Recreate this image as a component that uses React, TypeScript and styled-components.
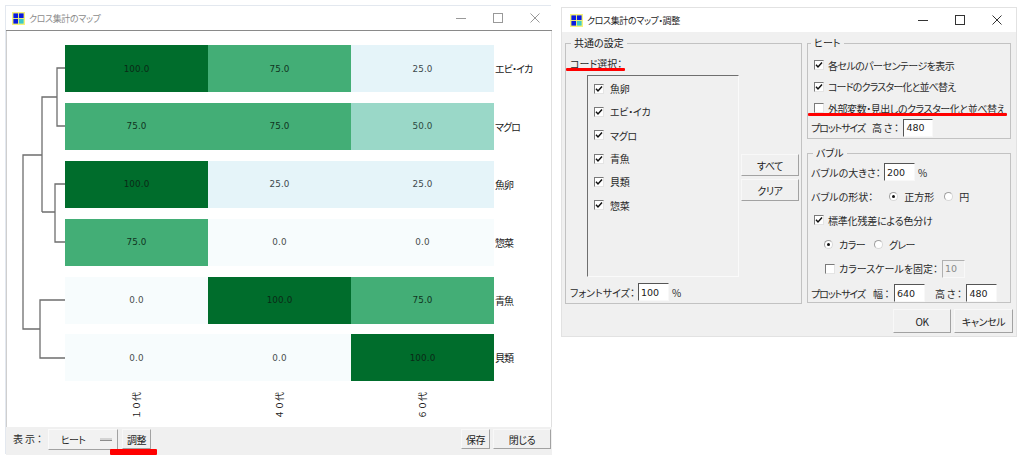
import React from "react";
import styled, { createGlobalStyle } from "styled-components";

const Global = createGlobalStyle`
  html, body { margin: 0; padding: 0; background: #fff; }
  body {
    font-family: "Noto Sans CJK JP", "Noto Sans", sans-serif;
    font-size: 10px;
    font-feature-settings: "palt";
    color: #2a2a2a;
  }
`;

const Page = styled.div`
  position: relative;
  width: 1024px;
  height: 466px;
  overflow: hidden;
  display: flex;
  align-items: flex-start;
  gap: 10px;
  padding: 6px 0 0 6px;
  box-sizing: border-box;
`;

const MapWindow = styled.div`
  width: 546px;
  height: 449px;
  display: flex;
  flex-direction: column;
  box-sizing: border-box;
  box-shadow: -1px -1px 0 #e3e8ef;
`;

const SettingsWindow = styled.div`
  width: 454px;
  height: 328px;
  margin-top: 2px;
  display: flex;
  flex-direction: column;
  box-sizing: border-box;
  background: #f0f0f0;
  box-shadow: 0 0 0 1px #e2e2e2;
`;

const TitleBar = styled.div<{ $active?: boolean }>`
  height: ${(p) => (p.$active ? 24 : 25)}px;
  flex: none;
  display: flex;
  align-items: center;
  gap: 4px;
  padding-left: ${(p) => (p.$active ? 8 : 6)}px;
  background: #fff;
  font-size: 9px;
  letter-spacing: -0.4px;
  color: ${(p) => (p.$active ? "#1c1c1c" : "#8c8c8c")};
  box-sizing: border-box;
  border-bottom: ${(p) => (p.$active ? "none" : "1px solid #8a8a8a")};
`;

const TitleText = styled.span`
  flex: 1;
`;

const Controls = styled.div<{ $active?: boolean }>`
  display: flex;
  color: ${(p) => (p.$active ? "#333" : "#999")};
  padding-right: ${(p) => (p.$active ? 14 : 12)}px;
  gap: 27px;
`;

const Plot = styled.div`
  height: 396px;
  flex: none;
  display: flex;
  align-items: flex-start;
  background: #fff;
  box-sizing: border-box;
  border-left: 1px solid #cfcfcf;
  border-right: 1px solid #e0e0e0;
  padding-top: 14px;
`;

const Dendrogram = styled.svg`
  width: 58px;
  height: 345px;
  flex: none;
  display: block;
`;

const Heat = styled.div`
  display: flex;
  flex-direction: column;
`;

const HeatRows = styled.div`
  display: flex;
  flex-direction: column;
  gap: 10.9px;
`;

const HeatRow = styled.div`
  display: flex;
  height: 47px;
`;

const Cell = styled.div<{ $bg: string; $ink: string }>`
  width: 143px;
  display: flex;
  align-items: center;
  justify-content: center;
  background: ${(p) => p.$bg};
  color: ${(p) => p.$ink};
  font-family: "DejaVu Sans", sans-serif;
  font-size: 8.8px;
  letter-spacing: 0.1px;
`;

const RowLabel = styled.div`
  width: 50px;
  padding-left: 1px;
  display: flex;
  align-items: center;
  font-size: 10px;
  letter-spacing: -0.9px;
  color: #222;
`;

const AxisRow = styled.div`
  display: flex;
  padding-top: 8px;
`;

const AxisLabel = styled.div`
  width: 143px;
  display: flex;
  justify-content: center;
  height: 30px;
`;

const AxisText = styled.span`
  writing-mode: vertical-rl;
  text-orientation: sideways;
  transform: rotate(180deg);
  font-size: 9px;
  font-feature-settings: normal;
  color: #222;
`;

const BottomBar = styled.div`
  flex: 1;
  display: flex;
  align-items: flex-start;
  background: #f0f0f0;
  padding: 2px 1px 0 7px;
`;

const BarLabel = styled.span`
  width: 35px;
  height: 19px;
  display: flex;
  align-items: center;
  font-size: 10px;
  letter-spacing: 2px;
`;

const BaseButton = styled.button<{ $w: number; $h?: number }>`
  width: ${(p) => p.$w}px;
  height: ${(p) => p.$h ?? 20}px;
  padding: 0;
  flex: none;
  font: inherit;
  font-size: 10px;
  letter-spacing: -0.4px;
  color: #222;
  background: #f0f0f0;
  border: none;
  border-top: 1px solid #f8f8f8;
  border-left: 1px solid #f8f8f8;
  border-right: 1px solid #a2a2a2;
  border-bottom: 1px solid #a2a2a2;
  box-sizing: border-box;
`;

const SelectBox = styled.div`
  width: 70px;
  height: 21px;
  flex: none;
  display: flex;
  align-items: center;
  justify-content: space-between;
  box-sizing: border-box;
  padding: 0 5px 0 12px;
  margin-right: 4px;
  background: #f2f2f2;
  border-bottom: 1px solid #a2a2a2;
  border-right: 1px solid #a2a2a2;
  border-top: 1px solid #fafafa;
  border-left: 1px solid #fafafa;
  font-size: 10px;
  letter-spacing: -0.8px;
`;

const SelectMark = styled.span`
  width: 12px;
  height: 3px;
  background: #d4d4d4;
  border-bottom: 1px solid #8c8c8c;
  box-sizing: border-box;
`;

const Spacer = styled.div`
  flex: 1;
`;

const SaveGroup = styled.div`
  display: flex;
  gap: 3px;
`;

const Underline = styled.div<{ $x: number; $y: number; $w: number; $h: number }>`
  position: absolute;
  left: ${(p) => p.$x}px;
  top: ${(p) => p.$y}px;
  width: ${(p) => p.$w}px;
  height: ${(p) => p.$h}px;
  background: #f00;
  border-radius: 1px;
`;

const SettingsBody = styled.div`
  display: flex;
  gap: 5px;
  padding: 11px 0 0 3px;
`;

const Column = styled.div`
  display: flex;
  flex-direction: column;
  gap: 14px;
`;

const Group = styled.div<{ $w: number; $h: number }>`
  position: relative;
  width: ${(p) => p.$w}px;
  height: ${(p) => p.$h}px;
  box-sizing: border-box;
  border: 1px solid #c2c2c2;
  padding: 0 3px;
`;

const Legend = styled.span<{ $x: number }>`
  position: absolute;
  left: ${(p) => p.$x}px;
  top: -8px;
  padding: 0 3px;
  background: #f0f0f0;
  line-height: 14px;
  font-size: 10px;
  color: #222;
`;

const CodeLabel = styled.div`
  margin-top: 13px;
  height: 14px;
  line-height: 14px;
  padding-left: 1px;
  font-size: 10px;
`;

const CodeArea = styled.div`
  display: flex;
  margin: 4px 0 0 18px;
`;

const CodeList = styled.div`
  width: 152px;
  height: 202px;
  flex: none;
  box-sizing: border-box;
  border-top: 1px solid #6f6f6f;
  border-left: 1px solid #6f6f6f;
  border-right: 1px solid #fafafa;
  border-bottom: 1px solid #fafafa;
  padding: 1px 0 0 6px;
`;

const ListRow = styled.div`
  height: 23.3px;
  display: flex;
  align-items: center;
  gap: 6px;
  font-size: 10px;
  letter-spacing: -0.3px;
`;

const SideButtons = styled.div`
  display: flex;
  flex-direction: column;
  gap: 3px;
  padding: 79px 0 0 2px;
`;

const Row = styled.div<{ $h?: number; $indent?: number; $gap?: number }>`
  height: ${(p) => p.$h ?? 24}px;
  display: flex;
  align-items: center;
  gap: ${(p) => p.$gap ?? 4}px;
  padding-left: ${(p) => p.$indent ?? 0}px;
  font-size: 10px;
  white-space: nowrap;
`;

const FontRow = styled(Row)`
  margin-top: 6px;
  padding-left: 1px;
`;

const HeatPanel = styled.div`
  padding-top: 10px;
`;

const BubblePanel = styled.div`
  padding-top: 6px;
`;

const NumInput = styled.input<{ $w: number; $disabled?: boolean }>`
  width: ${(p) => p.$w}px;
  height: 18px;
  flex: none;
  box-sizing: border-box;
  padding: 0 0 0 2px;
  margin: 0;
  font-family: "DejaVu Sans", sans-serif;
  font-size: 9.5px;
  color: ${(p) => (p.$disabled ? "#8a8a8a" : "#222")};
  background: ${(p) => (p.$disabled ? "#f0f0f0" : "#fff")};
  border: none;
  border-top: 1px solid ${(p) => (p.$disabled ? "#b0b0b0" : "#555")};
  border-left: 1px solid ${(p) => (p.$disabled ? "#b0b0b0" : "#555")};
  border-right: 1px solid #f8f8f8;
  border-bottom: 1px solid #f8f8f8;
  outline: none;
`;

const Check = styled.span`
  width: 10px;
  height: 10px;
  flex: none;
  box-sizing: border-box;
  background: #fff;
  border-top: 1px solid #7a7a7a;
  border-left: 1px solid #7a7a7a;
  border-right: 1px solid #e4e4e4;
  border-bottom: 1px solid #e4e4e4;
  display: flex;
  align-items: center;
  justify-content: center;
`;

const Radio = styled.span<{ $on?: boolean; $l?: number }>`
  width: 9px;
  height: 9px;
  flex: none;
  margin-left: ${(p) => p.$l ?? 0}px;
  border-radius: 50%;
  box-sizing: border-box;
  background: #fff;
  border: 1px solid #d8d8d8;
  border-top-color: #a0a0a0;
  border-left-color: #a0a0a0;
  display: flex;
  align-items: center;
  justify-content: center;
  &::after {
    content: "";
    width: 3px;
    height: 3px;
    border-radius: 50%;
    background: ${(p) => (p.$on ? "#111" : "transparent")};
  }
`;

const Tight = styled.span<{ $ls: number }>`
  letter-spacing: ${(p) => p.$ls}px;
`;

const FieldName = styled.span<{ $l: number }>`
  margin-left: ${(p) => p.$l}px;
  letter-spacing: 1.5px;
`;

const Footer = styled.div`
  display: flex;
  justify-content: flex-end;
  gap: 3px;
  padding: 5px 3px 0 0;
`;

const Box = ({ on = true }: { on?: boolean }) => (
  <Check>
    {on && (
      <svg width="8" height="8" viewBox="0 0 8 8">
        <path d="M1 3.8 3 6 7 1.6" fill="none" stroke="#111" strokeWidth="1.5" />
      </svg>
    )}
  </Check>
);

const AppIcon = () => (
  <svg width="13" height="13" viewBox="0 0 14 14">
    <rect width="14" height="14" fill="#f6f37a" />
    <rect x="1.5" y="1.5" width="5" height="5" fill="#0a1ae0" />
    <rect x="7.5" y="1.5" width="5" height="5" fill="#0a1ae0" />
    <rect x="1.5" y="7.5" width="5" height="5" fill="#0a1ae0" />
    <rect x="7.5" y="7.5" width="5" height="5" fill="#3cc8c8" />
  </svg>
);

const WinControls = ({ active }: { active?: boolean }) => (
  <Controls $active={active}>
    <svg width="10" height="10" viewBox="0 0 10 10">
      <path d="M0 5.5h10" stroke="currentColor" />
    </svg>
    <svg width="10" height="10" viewBox="0 0 10 10">
      <rect x=".5" y=".5" width="9" height="9" fill="none" stroke="currentColor" />
    </svg>
    <svg width="10" height="10" viewBox="0 0 10 10">
      <path d="M.5.5l9 9M9.5.5l-9 9" stroke="currentColor" />
    </svg>
  </Controls>
);

const palette: Record<string, [string, string]> = {
  "100.0": ["#006d2c", "#0a2a17"],
  "75.0": ["#43ae76", "#10351f"],
  "50.0": ["#9ad8c8", "#2c4a42"],
  "25.0": ["#e5f4f9", "#3d4a4d"],
  "0.0": ["#f7fcfd", "#4a4e4f"],
};

const rows: { label: string; values: string[] }[] = [
  { label: "エビ・イカ", values: ["100.0", "75.0", "25.0"] },
  { label: "マグロ", values: ["75.0", "75.0", "50.0"] },
  { label: "魚卵", values: ["100.0", "25.0", "25.0"] },
  { label: "惣菜", values: ["75.0", "0.0", "0.0"] },
  { label: "青魚", values: ["0.0", "100.0", "75.0"] },
  { label: "貝類", values: ["0.0", "0.0", "100.0"] },
];

const codes = ["魚卵", "エビ・イカ", "マグロ", "青魚", "貝類", "惣菜"];

export default function App() {
  return (
    <Page>
      <Global />
      <MapWindow>
        <TitleBar>
          <AppIcon />
          <TitleText>クロス集計のマップ</TitleText>
          <WinControls />
        </TitleBar>
        <Plot>
          <Dendrogram viewBox="7 46 58 345">
            <path
              d="M65 69H57V127H65M57 98H42V213M42 213H55M65 185H55V243H65M42 156H23V330H40M65 301H40V359H65"
              fill="none"
              stroke="#6e6e6e"
              strokeWidth="1.3"
            />
          </Dendrogram>
          <Heat>
            <HeatRows>
              {rows.map((r) => (
                <HeatRow key={r.label}>
                  {r.values.map((v, i) => (
                    <Cell key={i} $bg={palette[v][0]} $ink={palette[v][1]}>
                      {v}
                    </Cell>
                  ))}
                  <RowLabel>{r.label}</RowLabel>
                </HeatRow>
              ))}
            </HeatRows>
            <AxisRow>
              {["１０代", "４０代", "６０代"].map((a) => (
                <AxisLabel key={a}>
                  <AxisText>{a}</AxisText>
                </AxisLabel>
              ))}
            </AxisRow>
          </Heat>
        </Plot>
        <BottomBar>
          <BarLabel>表示：</BarLabel>
          <SelectBox>
            ヒート
            <SelectMark />
          </SelectBox>
          <BaseButton $w={29}>調整</BaseButton>
          <Spacer />
          <SaveGroup>
            <BaseButton $w={29}>保存</BaseButton>
            <BaseButton $w={58}>閉じる</BaseButton>
          </SaveGroup>
        </BottomBar>
      </MapWindow>

      <SettingsWindow>
        <TitleBar $active>
          <AppIcon />
          <TitleText>クロス集計のマップ・調整</TitleText>
          <WinControls active />
        </TitleBar>
        <SettingsBody>
          <Group $w={237} $h={261}>
            <Legend $x={5}>共通の設定</Legend>
            <CodeLabel>コード選択：</CodeLabel>
            <CodeArea>
              <CodeList>
                {codes.map((c) => (
                  <ListRow key={c}>
                    <Box />
                    {c}
                  </ListRow>
                ))}
              </CodeList>
              <SideButtons>
                <BaseButton $w={58} $h={22}>すべて</BaseButton>
                <BaseButton $w={58} $h={22}>クリア</BaseButton>
              </SideButtons>
            </CodeArea>
            <FontRow $h={18} $gap={3}>
              フォントサイズ：
              <NumInput $w={31} readOnly value="100" />
              %
            </FontRow>
          </Group>
          <Column>
            <Group $w={204} $h={96}>
              <Legend $x={3}>ヒート</Legend>
              <HeatPanel>
                <Row $h={22} $indent={3}><Box /><Tight $ls={-0.55}>各セルのパーセンテージを表示</Tight></Row>
                <Row $h={21.5} $indent={3}><Box /><Tight $ls={-0.85}>コードのクラスター化と並べ替え</Tight></Row>
                <Row $h={21} $indent={3}><Box on={false} /><Tight $ls={-0.45}>外部変数・見出しのクラスター化と並べ替え</Tight></Row>
                <Row $h={18} $gap={3}>
                  <Tight $ls={-1.1}>プロットサイズ</Tight>
                  <FieldName $l={4}>高さ：</FieldName>
                  <NumInput $w={30} readOnly value="480" />
                </Row>
              </HeatPanel>
            </Group>
            <Group $w={204} $h={150}>
              <Legend $x={5}>バブル</Legend>
              <BubblePanel>
                <Row $h={24.2} $gap={3}>
                  バブルの大きさ：
                  <NumInput $w={31} readOnly value="200" />
                  %
                </Row>
                <Row $h={24.2} $gap={6}>
                  バブルの形状：
                  <Radio $on $l={10} />
                  <span>正方形</span>
                  <Radio $l={4} />
                  <span>円</span>
                </Row>
                <Row $h={24.2} $indent={3}>
                  <Box /><Tight $ls={-0.2}>標準化残差による色分け</Tight>
                </Row>
                <Row $h={24.2} $indent={13} $gap={6}>
                  <Radio $on /><Tight $ls={-0.6}>カラー</Tight>
                  <Radio $l={3} /><Tight $ls={-0.6}>グレー</Tight>
                </Row>
                <Row $h={24.2} $indent={14}>
                  <Box on={false} />カラースケールを固定：
                  <NumInput $w={23} $disabled readOnly value="10" />
                </Row>
                <Row $h={24.2} $gap={3}>
                  <Tight $ls={-1.1}>プロットサイズ</Tight>
                  <FieldName $l={5}>幅：</FieldName>
                  <NumInput $w={31} readOnly value="640" />
                  <FieldName $l={7}>高さ：</FieldName>
                  <NumInput $w={31} readOnly value="480" />
                </Row>
              </BubblePanel>
            </Group>
          </Column>
        </SettingsBody>
        <Footer>
          <BaseButton $w={58} $h={24}>OK</BaseButton>
          <BaseButton $w={59} $h={24}>キャンセル</BaseButton>
        </Footer>
      </SettingsWindow>

      <Underline $x={110} $y={449} $w={47} $h={6} />
      <Underline $x={566} $y={68} $w={59} $h={3} />
      <Underline $x={808} $y={113} $w={199} $h={3} />
    </Page>
  );
}
